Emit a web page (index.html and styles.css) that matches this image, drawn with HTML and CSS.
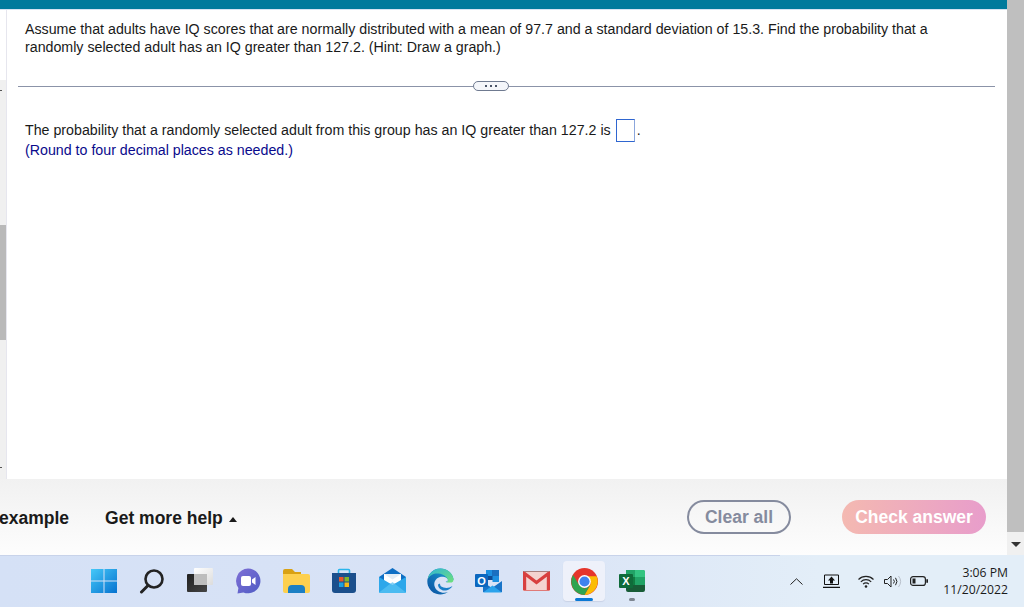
FILE: index.html
```html
<!DOCTYPE html>
<html lang="en">

<head>
    <meta charset="UTF-8">
    <meta name="viewport" content="width=device-width, initial-scale=1.0">
    <title>Homework question</title>
    <link rel="stylesheet" href="styles.css">
</head>

<body>
    <div class="screen">
        <div class="window">
            <div class="page">
                <div class="topbar"></div>
                <div class="content">
                    <div class="side">
                        <div class="track">
                            <span class="tick tick-top"></span>
                            <div class="thumb"></div>
                            <span class="tick tick-bottom"></span>
                        </div>
                    </div>
                    <div class="question">
                        <p class="stem">Assume that adults have IQ scores that are normally distributed with a mean of 97.7 and a standard deviation of 15.3. Find the probability that a randomly selected adult has an IQ greater than 127.2. (Hint: Draw a graph.)</p>
                        <div class="divider">
                            <span class="line line-left"></span>
                            <span class="pill"><i></i><i></i><i></i></span>
                            <span class="line"></span>
                        </div>
                        <p class="answer">The probability that a randomly selected adult from this group has an IQ greater than 127.2 is <span class="box"></span>.</p>
                        <p class="hint">(Round to four decimal places as needed.)</p>
                    </div>
                </div>
                <div class="footer">
                    <a href="#" class="link example">example</a>
                    <a href="#" class="link help">Get more help <span class="up"></span></a>
                    <a href="#" class="btn clear">Clear all</a>
                    <a href="#" class="btn check">Check answer</a>
                </div>
            </div>
            <div class="scroll">
                <div class="scroll-thumb"></div>
                <div class="scroll-end"><span class="down"></span></div>
            </div>
        </div>

        <div class="taskbar">
            <div class="apps">
                <div class="app">
                    <svg width="26" height="26" viewBox="0 0 26 26">
                        <defs>
                            <linearGradient id="win" x1="0" y1="0" x2="1" y2="1">
                                <stop offset="0" stop-color="#45c8f8"/>
                                <stop offset="1" stop-color="#0672cf"/>
                            </linearGradient>
                        </defs>
                        <path fill="url(#win)" d="M0 1h12.5v11.5H0zM13.5 1H26v11.5H13.5zM0 13.5h12.5V25H0zM13.5 13.5H26V25H13.5z"/>
                    </svg>
                </div>
                <div class="app">
                    <svg width="26" height="26" viewBox="0 0 26 26" fill="none" stroke="#232323">
                        <circle cx="15" cy="11" r="8.5" stroke-width="2.6"/>
                        <path d="M9 17.5L2.5 24" stroke-width="3" stroke-linecap="round"/>
                    </svg>
                </div>
                <div class="app">
                    <svg width="26" height="26" viewBox="0 0 26 26">
                        <defs>
                            <linearGradient id="back" x1="0" y1="0" x2="1" y2="1">
                                <stop offset="0" stop-color="#202020"/>
                                <stop offset="1" stop-color="#454545"/>
                            </linearGradient>
                            <linearGradient id="front" x1="0" y1="0" x2="1" y2="1">
                                <stop offset="0" stop-color="#ffffff"/>
                                <stop offset="1" stop-color="#dcdcdc"/>
                            </linearGradient>
                        </defs>
                        <rect x="0" y="6" width="20" height="18" rx="1" fill="url(#back)"/>
                        <rect x="7" y="0" width="19" height="17" rx="1" fill="url(#front)"/>
                        <rect x="7" y="6" width="13" height="11" fill="#bdbdbd"/>
                    </svg>
                </div>
                <div class="app">
                    <svg width="26" height="26" viewBox="0 0 26 26">
                        <defs>
                            <linearGradient id="teams" x1="0" y1="0" x2="1" y2="1">
                                <stop offset="0" stop-color="#7f6fd6"/>
                                <stop offset="1" stop-color="#4f5cc4"/>
                            </linearGradient>
                        </defs>
                        <path fill="url(#teams)" d="M13 0.5a12.4 12.4 0 1 1-4.6 23.9L2.5 25.5 3.4 20A12.4 12.4 0 0 1 13 0.5z"/>
                        <rect x="6" y="8" width="10" height="10" rx="2" fill="#fff"/>
                        <path fill="#fff" d="M17 11.5l3.5-2.5v8L17 14.5z"/>
                    </svg>
                </div>
                <div class="app">
                    <svg width="27" height="26" viewBox="0 0 27 26">
                        <path fill="#d9a113" d="M0 3a2 2 0 0 1 2-2h7l3 3h6v6H0z"/>
                        <path fill="#fdd04f" d="M0 6h25a2 2 0 0 1 2 2v15a2 2 0 0 1-2 2H2a2 2 0 0 1-2-2z"/>
                        <path fill="#1b7fc4" d="M5 25v-4a4 4 0 0 1 4-4h9a4 4 0 0 1 4 4v4z"/>
                    </svg>
                </div>
                <div class="app">
                    <svg width="26" height="26" viewBox="0 0 26 26">
                        <path fill="none" stroke="#29b5ec" stroke-width="1.6" d="M7.5 6V2.5a1 1 0 0 1 1-1h9a1 1 0 0 1 1 1V6"/>
                        <path fill="#1b4f8c" d="M1 5h24v17a3 3 0 0 1-3 3H4a3 3 0 0 1-3-3z"/>
                        <rect x="8" y="9" width="4.5" height="4.5" fill="#e8562a"/>
                        <rect x="13.5" y="9" width="4.5" height="4.5" fill="#7fb52a"/>
                        <rect x="8" y="14.5" width="4.5" height="4.5" fill="#1da1e0"/>
                        <rect x="13.5" y="14.5" width="4.5" height="4.5" fill="#f8b916"/>
                    </svg>
                </div>
                <div class="app">
                    <svg width="27" height="26" viewBox="0 0 27 26">
                        <path fill="#0f6fc4" d="M0 9L13.5 0 27 9v3H0z"/>
                        <path fill="#fff" d="M5 6h17v9H5z"/>
                        <path fill="#e3edf5" d="M5 6h17l-8.500 5.500z"/>
                        <path fill="#2da7ea" d="M0 9l13.500 8L27 9v15a1 1 0 0 1-1 1H1a1 1 0 0 1-1-1z"/>
                        <path fill="#5cc6f4" d="M0 24.500L13.500 14 27 24.500a1 1 0 0 1-1 .5H1a1 1 0 0 1-1-.5z" opacity=".65"/>
                    </svg>
                </div>
                <div class="app">
                    <svg width="27" height="27" viewBox="0 0 27 27">
                        <defs>
                            <linearGradient id="edge1" x1="0" y1="1" x2="1" y2="0">
                                <stop offset="0" stop-color="#0b4fa0"/>
                                <stop offset="1" stop-color="#1ba7d8"/>
                            </linearGradient>
                            <linearGradient id="edge2" x1="0" y1="0" x2="1" y2="1">
                                <stop offset="0" stop-color="#2fb4d8"/>
                                <stop offset="1" stop-color="#6fe07a"/>
                            </linearGradient>
                        </defs>
                        <path fill="url(#edge1)" d="M13.500 0.500A13 13 0 1 0 21 24c-5 2-12 0-13.500-6-1-4 1.500-8 5.500-9 4-.8 8 1 8 3 0 1.500-3 1.500-5 1.500h6C25 13.500 27 12 26.500 11 25.500 5 20 0.500 13.500 0.500z"/>
                        <path fill="url(#edge2)" d="M13.500 0.500C7 0.500 1.500 5.500 0.800 11c2-4 6.500-6 10.700-5.500 5.500.5 9.500 4.500 9.500 7 0 1-1 1.500-2 2h5c2.500 0 2.500-2.500 2.500-3.500C25.500 5 20 0.500 13.500 0.500z"/>
                        <path fill="#1a7fc8" d="M11 16.500c0 4 4 6.500 8 6 2.500-.3 5-2 6.500-4.500-3 2-6 2.500-9 1.500-3-1-3.500-2-3.500-4z"/>
                    </svg>
                </div>
                <div class="app">
                    <svg width="27" height="24" viewBox="0 0 27 24">
                        <path fill="#0f4c95" d="M11 1h13v10H11z"/>
                        <path fill="#1d8fe0" d="M11 1h6.500v6H11zM17.500 7H24v6h-6.500z"/>
                        <path fill="#1a6fc0" d="M17.500 1H24v6h-6.500z"/>
                        <path fill="#1874c8" d="M8 13l9 6 10-7v11H8z"/>
                        <path fill="#2ba3ec" d="M8 23.500l9.500-7 9.500 7z"/>
                        <rect x="0" y="5" width="13" height="13" rx="1" fill="#0c67bf"/>
                        <text class="tile-letter" x="6.500" y="15.500" text-anchor="middle">O</text>
                    </svg>
                </div>
                <div class="app">
                    <svg width="27" height="20" viewBox="0 0 27 20">
                        <rect x="0" y="0" width="27" height="20" fill="#f4d3d0"/>
                        <path fill="none" stroke="#d8403f" stroke-width="3.200" d="M1.600 19V2.500L13.500 11.500 25.400 2.500V19"/>
                        <path fill="none" stroke="#e07a78" d="M0.500 19.500h26"/>
                        <path fill="none" stroke="#a8807e" d="M0.500 0.500h26"/>
                    </svg>
                </div>
                <div class="app active">
                    <svg width="27" height="27" viewBox="0 0 26 26">
                        <circle cx="13" cy="13" r="13" fill="#e5352b"/>
                        <path fill="#fbbc04" d="M13 8h11.700A13 13 0 0 1 13 26l5.500-9.500A6 6 0 0 0 13 8z"/>
                        <path fill="#2fa44f" d="M2 6.500l5.500 9.500 5.500 4L18 17l-5 9A13 13 0 0 1 2 6.500z"/>
                        <circle cx="13" cy="13" r="6.200" fill="#fff"/>
                        <circle cx="13" cy="13" r="4.900" fill="#3f82ee"/>
                    </svg>
                    <span class="running"></span>
                </div>
                <div class="app open">
                    <svg width="26" height="24" viewBox="0 0 26 24">
                        <path fill="#21a366" d="M7 1h17a2 2 0 0 1 2 2v5H7z"/>
                        <path fill="#33c481" d="M16 1h8a2 2 0 0 1 2 2v5H16z"/>
                        <path fill="#107c41" d="M7 8h9v8H7z"/>
                        <path fill="#21a366" d="M16 8h10v8H16z"/>
                        <path fill="#185c37" d="M7 16h19v5a2 2 0 0 1-2 2H9a2 2 0 0 1-2-2z"/>
                        <rect x="0" y="5" width="14" height="14" rx="1" fill="#0f6b3a"/>
                        <text class="tile-letter" x="7" y="16" text-anchor="middle">X</text>
                    </svg>
                    <span class="pinned"></span>
                </div>
            </div>

            <div class="tray">
                <svg class="t-caret" width="13" height="7" viewBox="0 0 13 7" fill="none" stroke="#222" stroke-width="1">
                    <path d="M0.500 6.500L6.500 0.800l6 5.700"/>
                </svg>
                <svg class="t-monitor" width="17" height="14" viewBox="0 0 17 14">
                    <path fill="none" stroke="#111" stroke-width="1" d="M1.500 1h14v9.500h-14z"/>
                    <path fill="#111" d="M8.500 2.500L12 6.500H10v3H7v-3H5zM0 12.800h17V14H0z"/>
                </svg>
                <svg class="t-wifi" width="16" height="13" viewBox="0 0 16 13" fill="none" stroke="#222" stroke-width="1.100">
                    <path d="M0.500 4.500a10.500 10.500 0 0 1 15 0M2.800 6.800a7.200 7.200 0 0 1 10.400 0M5.100 9.100a4 4 0 0 1 5.800 0"/>
                    <circle cx="8" cy="11.500" r="1.300" fill="#222" stroke="none"/>
                </svg>
                <svg class="t-volume" width="18" height="13" viewBox="0 0 18 13" fill="none" stroke="#222" stroke-width="1">
                    <path d="M0.500 4.500h3l3.500-3.500v11L3.500 8.500h-3z"/>
                    <path d="M9.500 4.500a3 3 0 0 1 0 4M11.500 2.800a6 6 0 0 1 0 7.400"/>
                    <path d="M14.500 1a9 9 0 0 1 0 11" stroke="#b8bfca"/>
                </svg>
                <svg class="t-battery" width="18" height="10" viewBox="0 0 18 10">
                    <rect x="0.600" y="0.600" width="14.800" height="8.800" rx="2.500" fill="none" stroke="#222" stroke-width="1.200"/>
                    <path fill="#222" d="M2.500 2.500h3v5h-3zM16.300 3.200H18v3.600h-1.700z"/>
                </svg>
                <div class="clock">
                    <span>3:06 PM</span>
                    <span>11/20/2022</span>
                </div>
            </div>
        </div>
    </div>
</body>

</html>
```

FILE: styles.css
```css
*{
    margin: 0;padding: 0;
    box-sizing: border-box;
}
body {
    font-family: "Liberation Sans", Arial, sans-serif;
    background: #fff;
}
a{
    text-decoration: none;
}
.screen{
    display: flex;
    flex-direction: column;
    width: 1024px;
    height: 607px;
    overflow: hidden;
}
.window{
    display: flex;
    height: 555px;
}
.page{
    display: flex;
    flex-direction: column;
    width: 1007px;
}
.topbar{
    height: 10px;
    background: #007a9c;
    border-bottom: 1px solid #d5e3f2;
}
.content{
    display: flex;
    flex: 1;
    min-height: 0;
}

/* left strip */
.side{
    display: flex;
    flex-direction: column;
    width: 7px;
    padding-top: 70px;
    border-right: 1px solid #e6e6ee;
}
.track{
    position: relative;
    flex: 1;
    padding-top: 145px;
    background: #f0f0f0;
}
.thumb{
    height: 115px;
    background: #b9b9b9;
}
.tick{
    position: absolute;
    left: 0;
    width: 2px;
    height: 1px;
    background: #555;
}
.tick-top{
    top: 10px;
}
.tick-bottom{
    top: 387px;
}

/* question */
.question{
    flex: 1;
    padding: 10px 12px 0 11px;
    font-size: 14.23px;
    line-height: 18px;
    color: #1a1a1a;
}
.stem{
    width: 925px;
    margin-left: 7px;
}
.divider{
    display: flex;
    align-items: center;
    height: 10px;
    margin-top: 25px;
}
.line{
    flex: 1;
    height: 1px;
    background: #8b93a8;
}
.line-left{
    flex: none;
    width: 455px;
}
.pill{
    display: flex;
    justify-content: center;
    align-items: center;
    gap: 3px;
    width: 36px;
    height: 10px;
    border: 1px solid #6f7a90;
    border-radius: 5px;
    background: #f4f6fa;
}
.pill i{
    width: 2px;
    height: 2px;
    background: #4a5468;
}
.answer{
    display: flex;
    align-items: center;
    margin: 28px 0 0 7px;
    height: 22px;
    white-space: pre;
}
.box{
    width: 19px;
    height: 23px;
    margin: 0 2px 0 1px;
    background: #fff;
    border: 1px solid #2f66d0;
    border-right-color: #8ba6dc;
}
.hint{
    margin: 0 0 0 7px;
    color: #0a0a8c;
}

/* footer */
.footer{
    display: flex;
    align-items: center;
    height: 76px;
    padding-right: 21px;
    background: linear-gradient(#f1f1f1, #fdfdfd);
}
.link{
    padding-top: 2px;
    font-size: 17.5px;
    font-weight: bold;
    color: #1a1a1a;
}
.example{
    margin-left: -1px;
}
.help{
    display: flex;
    align-items: center;
    gap: 1px;
    margin-left: 36px;
    white-space: pre;
}
.up{
    width: 0;
    height: 0;
    margin-top: 3px;
    border-left: 4px solid transparent;
    border-right: 4px solid transparent;
    border-bottom: 5px solid #1a1a1a;
}
.btn{
    display: flex;
    justify-content: center;
    align-items: center;
    height: 34px;
    padding-top: 1px;
    border-radius: 17px;
    font-size: 17.5px;
    font-weight: bold;
}
.clear{
    width: 104px;
    margin-left: auto;
    color: #858b9e;
    border: 2px solid #858b9e;
}
.check{
    width: 144px;
    margin-left: 51px;
    color: #fff;
    background: linear-gradient(90deg, #f4b9b1, #e89dcb);
}

/* right scrollbar */
.scroll{
    display: flex;
    flex-direction: column;
    width: 17px;
    background: #f0f0f0;
}
.scroll-thumb{
    height: 532px;
    background: #bfbfbf;
}
.scroll-end{
    display: flex;
    flex: 1;
    justify-content: center;
    padding-top: 10px;
}
.down{
    width: 0;
    height: 0;
    border-left: 5px solid transparent;
    border-right: 5px solid transparent;
    border-top: 5px solid #333;
}

/* taskbar */
.taskbar{
    display: flex;
    align-items: center;
    height: 52px;
    padding: 0 16px 0 80px;
    background:
        linear-gradient(#c8d3ea, #c8d3ea) 0 0 / 780px 1px no-repeat,
        linear-gradient(90deg, #d5e1f6, #d9e3f6 50%, #e3eef8 80%);
}
.apps{
    display: flex;
}
.app{
    position: relative;
    display: flex;
    justify-content: center;
    align-items: center;
    width: 48px;
    height: 40px;
}
.active{
    background: #eef1fa;
    border-radius: 4px;
    box-shadow: 0 1px 1px #c9d2e6;
    width: 42px;
    margin: 0 3px;
}
.running{
    position: absolute;
    left: 12px;
    bottom: 0;
    width: 18px;
    height: 3px;
    border-radius: 2px;
    background: #0a78d4;
}
.pinned{
    position: absolute;
    left: 21px;
    bottom: 0;
    width: 6px;
    height: 3px;
    border-radius: 2px;
    background: #7d8590;
}
.tile-letter{
    font-family: "Liberation Sans", Arial, sans-serif;
    font-size: 11px;
    font-weight: bold;
    fill: #fff;
}
.tray{
    display: flex;
    align-items: center;
    margin-left: auto;
}
.t-monitor{
    margin-left: 20px;
}
.t-wifi{
    margin-left: 18px;
}
.t-volume{
    margin-left: 10px;
}
.t-battery{
    margin-left: 8px;
}
.clock{
    display: flex;
    flex-direction: column;
    align-items: flex-end;
    gap: 1px;
    margin-left: 15px;
    font-family: "Open Sans", sans-serif;
    font-size: 12.2px;
    line-height: 16px;
    color: #1a1a1a;
}
```
